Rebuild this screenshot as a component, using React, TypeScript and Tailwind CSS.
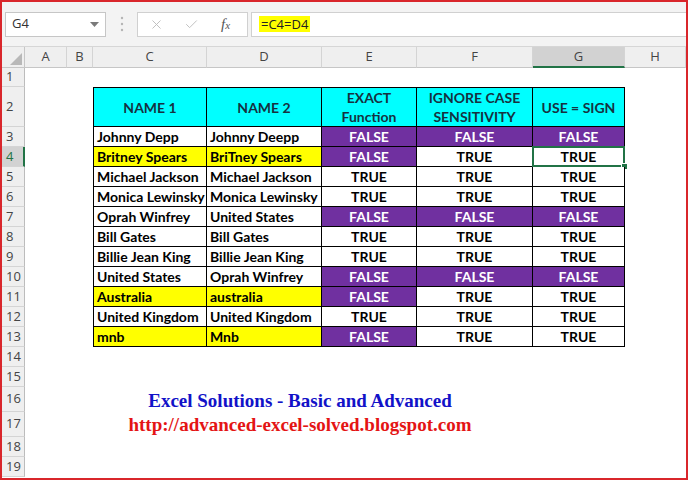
import { Check, X } from "lucide-react";

type Row = [string, string, boolean, boolean, boolean, boolean];

// name1, name2, exact, ignoreCase, equalSign, highlight
const rows: Row[] = [
  ["Johnny Depp", "Johnny Deepp", false, false, false, false],
  ["Britney Spears", "BriTney Spears", false, true, true, true],
  ["Michael Jackson", "Michael Jackson", true, true, true, false],
  ["Monica Lewinsky", "Monica Lewinsky", true, true, true, false],
  ["Oprah Winfrey", "United States", false, false, false, false],
  ["Bill Gates", "Bill Gates", true, true, true, false],
  ["Billie Jean King", "Billie Jean King", true, true, true, false],
  ["United States", "Oprah Winfrey", false, false, false, false],
  ["Australia", "australia", false, true, true, true],
  ["United Kingdom", "United Kingdom", true, true, true, false],
  ["mnb", "Mnb", false, true, true, true],
];

const cols = ["A", "B", "C", "D", "E", "F", "G", "H"];
const rowHeights = [
  "h-[19px]", "h-[40px]",
  "h-[20px]", "h-[20px]", "h-[20px]", "h-[20px]", "h-[20px]", "h-[20px]",
  "h-[20px]", "h-[20px]", "h-[20px]", "h-[20px]", "h-[20px]",
  "h-[20px]", "h-[20px]", "h-[25px]", "h-[25px]", "h-[20px]", "h-[20px]",
];

const cellFont = "font-['Lato',sans-serif] font-bold text-[14px] text-black";

function BoolCell({ v, selected }: { v: boolean; selected?: boolean }) {
  return (
    <div
      className={`relative flex items-center justify-center border-r border-b border-black ${cellFont} ${
        v ? "bg-white" : "bg-[#7030a0] !text-white"
      }`}
    >
      {v ? "TRUE" : "FALSE"}
      {selected && (
        <div className="absolute -left-px -top-px -right-px -bottom-px border-2 border-[#217346]">
          <div className="absolute -right-[5px] -bottom-[5px] w-[7px] h-[7px] bg-[#217346] border border-white" />
        </div>
      )}
    </div>
  );
}

function DataTable() {
  return (
    <div className="col-start-4 col-span-5 row-start-3 row-span-12 grid grid-cols-[113px_115px_95px_116px_92px] grid-rows-[39px_repeat(11,20px)] border-l border-t border-black">
      {[["NAME 1"], ["NAME 2"], ["EXACT", "Function"], ["IGNORE CASE", "SENSITIVITY"], ["USE = SIGN"]].map((h, i) => (
        <div
          key={i}
          className="flex flex-col items-center justify-center bg-[#00ffff] border-r border-b border-black font-['Lato',sans-serif] font-bold text-[14px] leading-[19px] text-[#16323f]"
        >
          {h.map((l) => (
            <span key={l}>{l}</span>
          ))}
        </div>
      ))}
      {rows.map(([a, b, e, f, g, hl], i) => (
        <div key={i} className="contents">
          <div className={`flex items-center pl-[3px] border-r border-b border-black ${cellFont} ${hl ? "bg-[#ffff00]" : "bg-white"}`}>{a}</div>
          <div className={`flex items-center pl-[3px] border-r border-b border-black ${cellFont} ${hl ? "bg-[#ffff00]" : "bg-white"}`}>{b}</div>
          <BoolCell v={e} />
          <BoolCell v={f} />
          <BoolCell v={g} selected={i === 1} />
        </div>
      ))}
    </div>
  );
}

function FormulaBar() {
  return (
    <div className="h-[45px] flex items-center bg-[#f3f3f3] border-b border-[#d6d6d6] font-['Open_Sans',sans-serif]">
      <div className="ml-[3px] w-[101px] h-[25px] flex items-center justify-between bg-white border border-[#c6c6c6] pl-[6px] pr-[6px] text-[13px] text-[#333]">
        <span>G4</span>
        <svg width="9" height="5" viewBox="0 0 9 5">
          <path d="M0 0h9L4.5 5z" fill="#7a7a7a" />
        </svg>
      </div>
      <svg className="ml-[14px]" width="4" height="18" viewBox="0 0 4 18">
        <circle cx="2" cy="3" r="1.2" fill="#b5b5b5" />
        <circle cx="2" cy="9" r="1.2" fill="#b5b5b5" />
        <circle cx="2" cy="15" r="1.2" fill="#b5b5b5" />
      </svg>
      <div className="ml-[13px] w-[111px] h-[25px] flex items-center bg-white border border-[#d0d0d0] text-[#bdbdbd]">
        <X size={15} strokeWidth={1.5} className="ml-[11px]" />
        <Check size={15} strokeWidth={1.5} className="ml-[20px]" />
        <span className="ml-[22px] font-['Liberation_Serif',serif] italic text-[15px] text-[#555]">
          f<span className="text-[11px]">x</span>
        </span>
      </div>
      <div className="ml-[3px] flex-1 h-[25px] flex items-center bg-white border-y border-l border-[#d0d0d0] pl-[7px]">
        <span className="bg-[#ffff00] px-[2px] text-[13px] leading-[16px] text-[#222]">=C4=D4</span>
      </div>
    </div>
  );
}

export default function App() {
  return (
    <div className="w-[688px] h-[480px] overflow-hidden border-2 border-[#d9262b] bg-white">
      <FormulaBar />
      <div className="grid grid-cols-[23px_42px_26px_114px_115px_95px_116px_92px_1fr] grid-rows-[21px_19px_40px_repeat(11,20px)_20px_20px_25px_25px_20px_20px] font-['Open_Sans',sans-serif]">
        {/* corner */}
        <div className="col-start-1 row-start-1 relative bg-[#efefef] border-r border-b border-[#c6c6c6]">
          <svg className="absolute right-[2px] bottom-[2px]" width="12" height="12" viewBox="0 0 12 12">
            <path d="M12 0V12H0z" fill="#b8b8b8" />
          </svg>
        </div>
        {cols.map((c, i) => (
          <div
            key={c}
            className={`row-start-1 flex items-center justify-center text-[13px] text-[#444] border-r border-[#d4d4d4] ${
              c === "G"
                ? "bg-[#d2d2d2] border-b-2 border-b-[#217346]"
                : "bg-[#efefef] border-b border-b-[#c6c6c6]"
            }`}
            style={{ gridColumnStart: i + 2 }}
          >
            {c}
          </div>
        ))}
        {rowHeights.map((h, i) => (
          <div
            key={i}
            className={`col-start-1 ${h} flex items-center pl-[4px] text-[13px] border-b border-[#d4d4d4] ${
              i === 3
                ? "bg-[#d2d2d2] text-[#217346] border-r-2 border-r-[#217346]"
                : "bg-[#efefef] text-[#444] border-r border-r-[#bcbcbc]"
            }`}
            style={{ gridRowStart: i + 2 }}
          >
            {i + 1}
          </div>
        ))}
        <DataTable />
        <div className="col-start-3 col-span-5 row-start-17 flex items-end justify-center font-['Liberation_Serif',serif] font-bold text-[19px] leading-[22px] text-[#1212c8]">
          Excel Solutions - Basic and Advanced
        </div>
        <div className="col-start-3 col-span-5 row-start-18 flex items-center justify-center font-['Liberation_Serif',serif] font-bold text-[19px] leading-[22px] text-[#e41414]">
          http://advanced-excel-solved.blogspot.com
        </div>
      </div>
    </div>
  );
}
